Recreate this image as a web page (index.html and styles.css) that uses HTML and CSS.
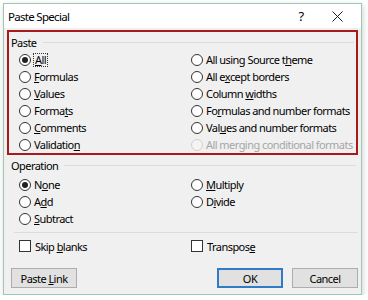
FILE: index.html
```html
<!DOCTYPE html>
<html lang="en">
<head>
    <meta charset="UTF-8">
    <meta name="viewport" content="width=device-width, initial-scale=1.0">
    <title>Paste Special</title>
    <link rel="stylesheet" href="styles.css">
</head>
<body>

    <div class="window">
        <div class="titlebar">
            <span class="title">Paste Special</span>
            <span class="help">?</span>
            <span class="close">
                <svg width="11" height="11" viewBox="0 0 11 11">
                    <path d="M0.5 0.5 L10.5 10.5 M10.5 0.5 L0.5 10.5" stroke="#222" stroke-width="1" fill="none"/>
                </svg>
            </span>
        </div>

        <div class="content">
            <div class="highlight">
                <div class="group-label"><span>Paste</span></div>
                <div class="options paste">
                    <label class="opt"><span class="radio checked"></span><span class="focus"><u>A</u>ll</span></label>
                    <label class="opt"><span class="radio"></span><span>All using Source t<u>h</u>eme</span></label>
                    <label class="opt"><span class="radio"></span><span><u>F</u>ormulas</span></label>
                    <label class="opt"><span class="radio"></span><span>All e<u>x</u>cept borders</span></label>
                    <label class="opt"><span class="radio"></span><span><u>V</u>alues</span></label>
                    <label class="opt"><span class="radio"></span><span>Column <u>w</u>idths</span></label>
                    <label class="opt"><span class="radio"></span><span>Forma<u>t</u>s</span></label>
                    <label class="opt"><span class="radio"></span><span>Fo<u>r</u>mulas and number formats</span></label>
                    <label class="opt"><span class="radio"></span><span><u>C</u>omments</span></label>
                    <label class="opt"><span class="radio"></span><span>Val<u>u</u>es and number formats</span></label>
                    <label class="opt"><span class="radio"></span><span>Validatio<u>n</u></span></label>
                    <label class="opt disabled"><span class="radio"></span><span>All merging conditional formats</span></label>
                </div>
            </div>

            <div class="group-label outer"><span>Operation</span></div>
            <div class="options operation">
                <label class="opt"><span class="radio checked"></span><span>N<u>o</u>ne</span></label>
                <label class="opt"><span class="radio"></span><span><u>M</u>ultiply</span></label>
                <label class="opt"><span class="radio"></span><span>A<u>d</u>d</span></label>
                <label class="opt"><span class="radio"></span><span>D<u>i</u>vide</span></label>
                <label class="opt"><span class="radio"></span><span><u>S</u>ubtract</span></label>
            </div>

            <div class="separator"></div>

            <div class="options checks">
                <label class="opt"><span class="checkbox"></span><span>Skip <u>b</u>lanks</span></label>
                <label class="opt"><span class="checkbox"></span><span>Transpos<u>e</u></span></label>
            </div>

            <div class="buttons">
                <button class="btn">Paste <u>L</u>ink</button>
                <span class="spacer"></span>
                <button class="btn default">OK</button>
                <button class="btn">Cancel</button>
            </div>
        </div>
    </div>

</body>
</html>
```

FILE: styles.css
```css
body {
    margin: 0;
    background-color: #fff;
    font-family: "Noto Sans", sans-serif;
    font-size: 11px;
    letter-spacing: -0.55px;
    color: #000;
}

.window {
    margin: 3px 6px 0 3px;
    width: 357px;
    height: 290px;
    border: 1px solid #9fc8b3;
    background-color: #f0f0f0;
    box-shadow: 1px 2px 6px rgba(0, 0, 0, 0.18);
    display: flex;
    flex-direction: column;
}

.titlebar {
    height: 24px;
    background-color: #fff;
    display: flex;
    align-items: center;
    padding-left: 4px;
}

.title {
    font-size: 11.5px;
    letter-spacing: -0.7px;
    flex: 1;
}

.help {
    font-size: 13px;
    width: 20px;
    text-align: center;
    margin-right: 21px;
}

.close {
    width: 11px;
    height: 11px;
    margin-right: 18px;
    display: flex;
}

.content {
    padding: 2px 3px 0 3px;
}

.highlight {
    border: 2px solid #a9191c;
    padding-top: 2px;
}

.group-label {
    display: flex;
    align-items: center;
    height: 17px;
    padding-left: 2px;
    padding-right: 2px;
}

.group-label::after {
    content: "";
    flex: 1;
    height: 1px;
    background-color: #dcdcdc;
    margin-left: 6px;
}

.group-label.outer {
    padding-left: 4px;
    margin-top: 2px;
}

.options {
    display: grid;
    grid-template-columns: 172px 1fr;
    grid-auto-rows: 17px;
}

.options.paste {
    padding-left: 10px;
}

.options.operation {
    padding-left: 12px;
    margin-top: 2px;
}

.opt {
    display: flex;
    align-items: center;
    white-space: nowrap;
}

.radio {
    box-sizing: border-box;
    width: 12px;
    height: 12px;
    border: 1px solid #333;
    border-radius: 50%;
    background-color: #fff;
    margin-right: 3px;
    display: flex;
    align-items: center;
    justify-content: center;
}

.radio.checked::after {
    content: "";
    width: 6px;
    height: 6px;
    border-radius: 50%;
    background-color: #222;
}

.focus {
    outline: 1px dotted #333;
    outline-offset: 0;
    padding: 0 1px;
    line-height: 12px;
}

.disabled {
    color: #a6a6a6;
}

.disabled .radio {
    border-color: #d0d0d0;
    background-color: #f4f4f4;
}

.separator {
    height: 1px;
    background-color: #dcdcdc;
    margin: 5px 0 0 7px;
}

.options.checks {
    padding-left: 12px;
    margin-top: 4px;
    grid-auto-rows: 18px;
}

.checkbox {
    box-sizing: border-box;
    width: 12px;
    height: 12px;
    border: 1px solid #333;
    background-color: #fff;
    margin-right: 4px;
}

.buttons {
    display: flex;
    gap: 9px;
    padding-left: 4px;
    margin-top: 13px;
}

.spacer {
    flex: 1;
}

.btn {
    box-sizing: border-box;
    width: 66px;
    height: 20px;
    border: 1px solid #adadad;
    background-color: #e1e1e1;
    font-family: inherit;
    font-size: 11px;
    letter-spacing: -0.55px;
    color: #000;
    padding: 0;
}

.btn.default {
    border: 2px solid #2f7bc4;
}
```
